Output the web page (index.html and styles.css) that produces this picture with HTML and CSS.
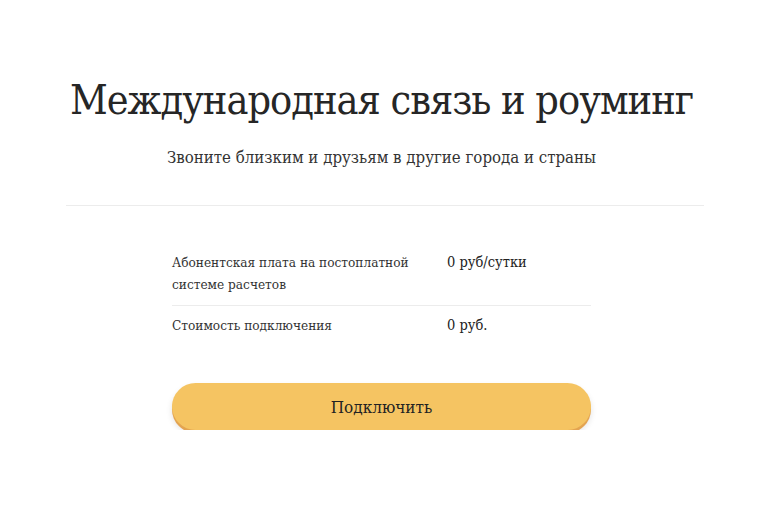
FILE: index.html
```html
<!DOCTYPE html>
<html lang="ru">

<head>
    <meta charset="UTF-8">
    <meta name="viewport" content="width=device-width, initial-scale=1.0">
    <title>Международная связь и роуминг</title>
    <link rel="stylesheet" href="styles.css">
</head>

<body>

    <div class="service">
        <div class="service-head">
            <h1 class="service-title">Международная связь и роуминг</h1>
            <p class="service-lead">Звоните близким и друзьям в другие города и страны</p>
        </div>

        <div class="prices">
            <div class="price-row">
                <div class="price-name">Абонентская плата на постоплатной системе расчетов</div>
                <div class="price-value">0 руб/сутки</div>
            </div>
            <div class="price-row">
                <div class="price-name">Стоимость подключения</div>
                <div class="price-value">0 руб.</div>
            </div>
        </div>

        <div class="btn-container">
            <button class="btn">Подключить</button>
        </div>
    </div>

</body>

</html>
```

FILE: styles.css
```css
body,
html {
    margin: 0;
    background-color: #fff;
    color: #222;
    font-family: "DejaVu Serif Condensed", "DejaVu Serif", serif;
}

.service {
    padding-top: 72px;
}

.service-head {
    width: 638px;
    margin: 0 auto;
    text-align: center;
    border-bottom: 1px solid #ececec;
    padding: 0 7px 37px 0;
    box-sizing: border-box;
}

.service-title {
    margin: 0;
    font-size: 41px;
    font-weight: normal;
    letter-spacing: -1px;
    line-height: 56px;
    white-space: nowrap;
    color: #262626;
}

.service-lead {
    margin: 18px 0 0;
    font-size: 16.7px;
    line-height: 22px;
    color: #333;
}

/* the price table and button sit a little left of the page centre */
.prices,
.btn-container {
    width: 419px;
    margin: 37px 0 0 calc(50% - 213px);
}

.prices {
    margin-top: 38px;
}

.price-row {
    display: flex;
    font-size: 13.5px;
    line-height: 22px;
    color: #333;
    padding: 7px 0 10px;
}

.price-row + .price-row {
    padding-top: 8px;
    border-top: 1px solid #ececec;
}

.price-name {
    width: 275px;
    flex-shrink: 0;
}

.price-value {
    font-size: 14.5px;
    color: #222;
}

.btn {
    width: 100%;
    height: 47px;
    border: none;
    border-radius: 24px;
    background-color: #f5c462;
    box-shadow: 0 3px 0 #e3a451, 0 4px 6px rgba(0, 0, 0, 0.12);
    font-family: inherit;
    font-size: 17px;
    color: #222;
    cursor: pointer;
}
```
